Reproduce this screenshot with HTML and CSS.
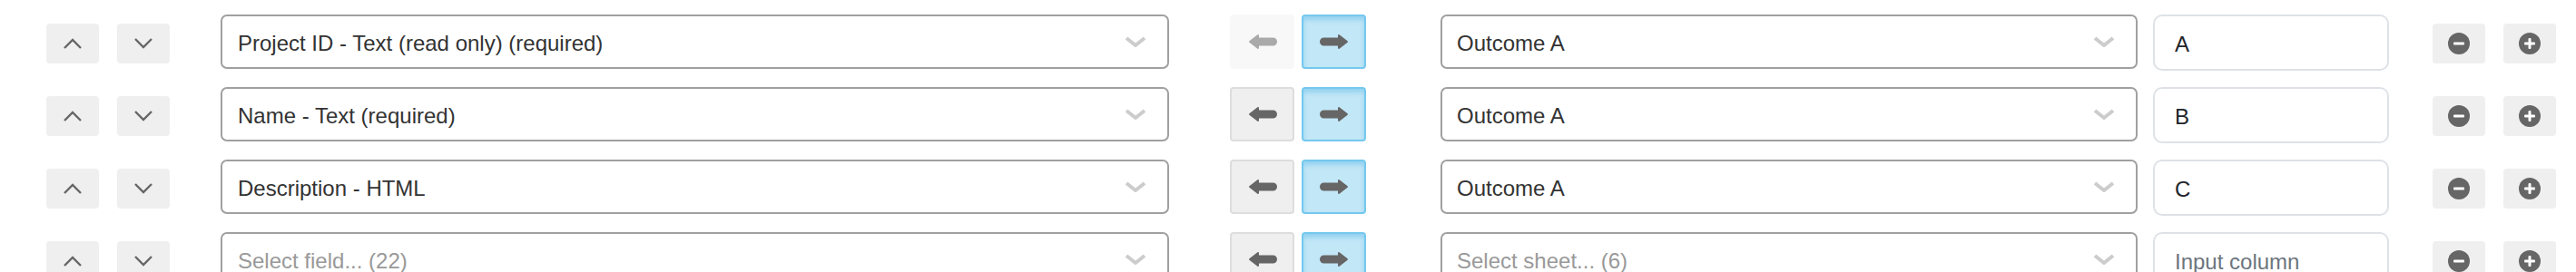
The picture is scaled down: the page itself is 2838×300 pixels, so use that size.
FILE: index.html
```html
<!DOCTYPE html>
<html lang="en">
<head>
    <meta charset="UTF-8">
    <title>Field Mapping</title>
    <link rel="stylesheet" href="styles.css">
</head>
<body>
    <div id="mapping">
        <div class="map-row">
            <button class="move-btn"><svg viewBox="0 0 22 14"><path d="M2 12 L11 3 L20 12"/></svg></button>
            <button class="move-btn"><svg viewBox="0 0 22 14"><path d="M2 2 L11 11 L20 2"/></svg></button>
            <div class="field-select">
                <span class="value">Project ID - Text (read only) (required)</span>
                <svg class="caret" viewBox="0 0 24 12"><path d="M2 2 L12 10 L22 2"/></svg>
            </div>
            <button class="dir-btn left" disabled><svg viewBox="0 0 32 18"><path d="M11 2 L2 9 L11 16 Z"/><rect x="8" y="5.5" width="23" height="7" rx="3.5"/></svg></button>
            <button class="dir-btn right active"><svg viewBox="0 0 32 18"><path d="M21 2 L30 9 L21 16 Z"/><rect x="1" y="5.5" width="23" height="7" rx="3.5"/></svg></button>
            <div class="sheet-select">
                <span class="value">Outcome A</span>
                <svg class="caret" viewBox="0 0 24 12"><path d="M2 2 L12 10 L22 2"/></svg>
            </div>
            <input class="col-input" type="text" value="A" placeholder="Input column">
            <button class="row-btn remove"><svg viewBox="0 0 24 24"><circle cx="12" cy="12" r="12"/><rect x="6" y="10.5" width="12" height="3" rx="1"/></svg></button>
            <button class="row-btn add"><svg viewBox="0 0 24 24"><circle cx="12" cy="12" r="12"/><rect x="6" y="10.5" width="12" height="3" rx="1"/><rect x="10.5" y="6" width="3" height="12" rx="1"/></svg></button>
        </div>

        <div class="map-row">
            <button class="move-btn"><svg viewBox="0 0 22 14"><path d="M2 12 L11 3 L20 12"/></svg></button>
            <button class="move-btn"><svg viewBox="0 0 22 14"><path d="M2 2 L11 11 L20 2"/></svg></button>
            <div class="field-select">
                <span class="value">Name - Text (required)</span>
                <svg class="caret" viewBox="0 0 24 12"><path d="M2 2 L12 10 L22 2"/></svg>
            </div>
            <button class="dir-btn left"><svg viewBox="0 0 32 18"><path d="M11 2 L2 9 L11 16 Z"/><rect x="8" y="5.5" width="23" height="7" rx="3.5"/></svg></button>
            <button class="dir-btn right active"><svg viewBox="0 0 32 18"><path d="M21 2 L30 9 L21 16 Z"/><rect x="1" y="5.5" width="23" height="7" rx="3.5"/></svg></button>
            <div class="sheet-select">
                <span class="value">Outcome A</span>
                <svg class="caret" viewBox="0 0 24 12"><path d="M2 2 L12 10 L22 2"/></svg>
            </div>
            <input class="col-input" type="text" value="B" placeholder="Input column">
            <button class="row-btn remove"><svg viewBox="0 0 24 24"><circle cx="12" cy="12" r="12"/><rect x="6" y="10.5" width="12" height="3" rx="1"/></svg></button>
            <button class="row-btn add"><svg viewBox="0 0 24 24"><circle cx="12" cy="12" r="12"/><rect x="6" y="10.5" width="12" height="3" rx="1"/><rect x="10.5" y="6" width="3" height="12" rx="1"/></svg></button>
        </div>

        <div class="map-row">
            <button class="move-btn"><svg viewBox="0 0 22 14"><path d="M2 12 L11 3 L20 12"/></svg></button>
            <button class="move-btn"><svg viewBox="0 0 22 14"><path d="M2 2 L11 11 L20 2"/></svg></button>
            <div class="field-select">
                <span class="value">Description - HTML</span>
                <svg class="caret" viewBox="0 0 24 12"><path d="M2 2 L12 10 L22 2"/></svg>
            </div>
            <button class="dir-btn left"><svg viewBox="0 0 32 18"><path d="M11 2 L2 9 L11 16 Z"/><rect x="8" y="5.5" width="23" height="7" rx="3.5"/></svg></button>
            <button class="dir-btn right active"><svg viewBox="0 0 32 18"><path d="M21 2 L30 9 L21 16 Z"/><rect x="1" y="5.5" width="23" height="7" rx="3.5"/></svg></button>
            <div class="sheet-select">
                <span class="value">Outcome A</span>
                <svg class="caret" viewBox="0 0 24 12"><path d="M2 2 L12 10 L22 2"/></svg>
            </div>
            <input class="col-input" type="text" value="C" placeholder="Input column">
            <button class="row-btn remove"><svg viewBox="0 0 24 24"><circle cx="12" cy="12" r="12"/><rect x="6" y="10.5" width="12" height="3" rx="1"/></svg></button>
            <button class="row-btn add"><svg viewBox="0 0 24 24"><circle cx="12" cy="12" r="12"/><rect x="6" y="10.5" width="12" height="3" rx="1"/><rect x="10.5" y="6" width="3" height="12" rx="1"/></svg></button>
        </div>

        <div class="map-row">
            <button class="move-btn"><svg viewBox="0 0 22 14"><path d="M2 12 L11 3 L20 12"/></svg></button>
            <button class="move-btn"><svg viewBox="0 0 22 14"><path d="M2 2 L11 11 L20 2"/></svg></button>
            <div class="field-select">
                <span class="placeholder">Select field... (22)</span>
                <svg class="caret" viewBox="0 0 24 12"><path d="M2 2 L12 10 L22 2"/></svg>
            </div>
            <button class="dir-btn left"><svg viewBox="0 0 32 18"><path d="M11 2 L2 9 L11 16 Z"/><rect x="8" y="5.5" width="23" height="7" rx="3.5"/></svg></button>
            <button class="dir-btn right active"><svg viewBox="0 0 32 18"><path d="M21 2 L30 9 L21 16 Z"/><rect x="1" y="5.5" width="23" height="7" rx="3.5"/></svg></button>
            <div class="sheet-select">
                <span class="placeholder">Select sheet... (6)</span>
                <svg class="caret" viewBox="0 0 24 12"><path d="M2 2 L12 10 L22 2"/></svg>
            </div>
            <input class="col-input" type="text" value="" placeholder="Input column">
            <button class="row-btn remove"><svg viewBox="0 0 24 24"><circle cx="12" cy="12" r="12"/><rect x="6" y="10.5" width="12" height="3" rx="1"/></svg></button>
            <button class="row-btn add"><svg viewBox="0 0 24 24"><circle cx="12" cy="12" r="12"/><rect x="6" y="10.5" width="12" height="3" rx="1"/><rect x="10.5" y="6" width="3" height="12" rx="1"/></svg></button>
        </div>
    </div>
</body>
</html>
```

FILE: styles.css
```css
body {
    margin: 0;
    background-color: white;
    font-family: 'Liberation Sans', Arial, sans-serif;
    font-size: 24px;
    color: #333;
}

#mapping {
    display: flex;
    flex-direction: column;
    gap: 20px;
    padding: 16px 0 0 51px;
}

.map-row {
    display: flex;
    align-items: flex-start;
    height: 60px;
}

button {
    padding: 0;
    font: inherit;
    cursor: pointer;
    display: flex;
    align-items: center;
    justify-content: center;
}

/* up / down */
.move-btn {
    width: 58px;
    height: 44px;
    margin-top: 10px;
    margin-right: 20px;
    border: none;
    border-radius: 4px;
    background-color: #efefef;
}

.move-btn svg {
    width: 22px;
    height: 14px;
    fill: none;
    stroke: #666;
    stroke-width: 2.4;
}

.move-btn + .move-btn {
    margin-right: 56px;
}

/* selects */
.field-select, .sheet-select {
    box-sizing: border-box;
    height: 60px;
    border: 2px solid #a0a0a0;
    border-radius: 7px;
    display: flex;
    align-items: center;
    justify-content: space-between;
    padding: 4px 23px 0 17px;
    background-color: white;
}

.field-select {
    width: 1045px;
    margin-right: 67px;
}

.sheet-select {
    width: 768px;
    margin-right: 17px;
    padding-left: 16px;
}

.caret {
    margin-top: -4px;
}

.placeholder {
    color: #999;
}

.caret {
    width: 24px;
    height: 12px;
    fill: none;
    stroke: #ccc;
    stroke-width: 4;
    stroke-linejoin: round;
}

/* direction */
.dir-btn {
    box-sizing: border-box;
    width: 71px;
    height: 60px;
    border: 2px solid #ddd;
    border-radius: 4px;
    background-color: #efefef;
}

.dir-btn svg {
    width: 32px;
    height: 18px;
    fill: #666;
    stroke: #666;
    stroke-width: 2;
    stroke-linejoin: round;
}

.dir-btn.left {
    margin-right: 8px;
}

.dir-btn.right {
    margin-right: 82px;
}

.dir-btn:disabled {
    background-color: #f8f8f8;
    border-color: #f8f8f8;
    cursor: default;
}

.dir-btn:disabled svg {
    fill: #aaa;
    stroke: #aaa;
}

.dir-btn.active {
    background-color: #c2e7f7;
    border-color: #74c8ee;
    box-shadow: inset 0 4px 5px rgba(60, 170, 225, 0.35);
}

/* column input */
.col-input {
    box-sizing: border-box;
    width: 260px;
    height: 62px;
    margin-right: 48px;
    border: 2px solid #dee2e6;
    border-radius: 10px;
    padding: 4px 22px 0;
    font: inherit;
    color: #212529;
    outline: none;
}

.col-input::placeholder {
    color: #6c757d;
}

/* remove / add */
.row-btn {
    width: 58px;
    height: 44px;
    margin-top: 10px;
    border: none;
    border-radius: 4px;
    background-color: #efefef;
}

.row-btn svg {
    width: 24px;
    height: 24px;
}

.row-btn circle {
    fill: #666;
}

.row-btn rect {
    fill: white;
}

.row-btn.remove {
    margin-right: 20px;
}
```
